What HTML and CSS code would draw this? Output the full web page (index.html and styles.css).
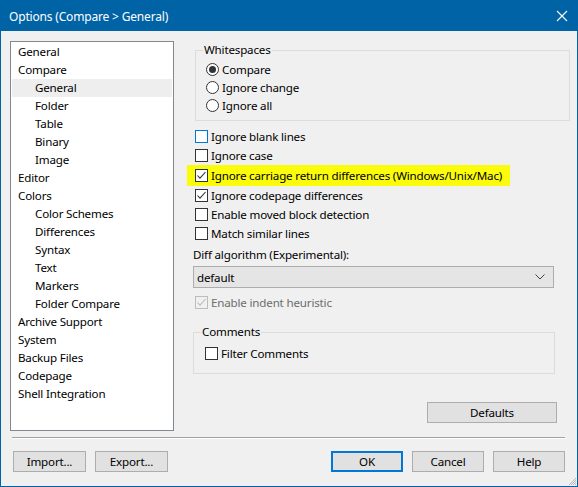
FILE: index.html
```html
<!DOCTYPE html>
<html lang="en">

<head>
  <meta charset="UTF-8">
  <title>Options (Compare &gt; General)</title>
  <link rel="stylesheet" href="styles.css">
</head>

<body>
  <div class="window">
    <div class="titlebar">
      <span class="title">Options (Compare &gt; General)</span>
      <svg class="close" width="12" height="12" viewBox="0 0 12 12">
        <path d="M1 1 L11 11 M11 1 L1 11" stroke="#fff" stroke-width="1.1" fill="none" />
      </svg>
    </div>

    <div class="main">
      <ul class="tree">
        <li>General</li>
        <li>Compare</li>
        <li class="sub selected">General</li>
        <li class="sub">Folder</li>
        <li class="sub">Table</li>
        <li class="sub">Binary</li>
        <li class="sub">Image</li>
        <li>Editor</li>
        <li>Colors</li>
        <li class="sub">Color Schemes</li>
        <li class="sub">Differences</li>
        <li class="sub">Syntax</li>
        <li class="sub">Text</li>
        <li class="sub">Markers</li>
        <li class="sub">Folder Compare</li>
        <li>Archive Support</li>
        <li>System</li>
        <li>Backup Files</li>
        <li>Codepage</li>
        <li>Shell Integration</li>
      </ul>

      <div class="panel">
        <fieldset class="group whitespaces">
          <legend>Whitespaces</legend>
          <div class="option"><span class="radio on"></span>Compare</div>
          <div class="option"><span class="radio"></span>Ignore change</div>
          <div class="option"><span class="radio"></span>Ignore all</div>
        </fieldset>

        <div class="checks">
          <div class="option check-row"><span class="box focus"></span>Ignore blank lines</div>
          <div class="option check-row"><span class="box"></span>Ignore case</div>
          <div class="option check-row highlight">
            <span class="box"><svg width="11" height="11" viewBox="0 0 11 11"><path d="M1.5 5.5 L4 8.2 L9.5 2" stroke="#333" stroke-width="1.1" fill="none" /></svg></span>
            Ignore carriage return differences (Windows/Unix/Mac)
          </div>
          <div class="option check-row">
            <span class="box"><svg width="11" height="11" viewBox="0 0 11 11"><path d="M1.5 5.5 L4 8.2 L9.5 2" stroke="#333" stroke-width="1.1" fill="none" /></svg></span>
            Ignore codepage differences
          </div>
          <div class="option check-row"><span class="box"></span>Enable moved block detection</div>
          <div class="option check-row"><span class="box"></span>Match similar lines</div>
        </div>

        <div class="field-label">Diff algorithm (Experimental):</div>
        <div class="select">
          <span>default</span>
          <svg width="10" height="6" viewBox="0 0 10 6"><path d="M0.5 0.5 L5 5 L9.5 0.5" stroke="#444" stroke-width="1" fill="none" /></svg>
        </div>

        <div class="option disabled">
          <span class="box"><svg width="11" height="11" viewBox="0 0 11 11"><path d="M1.5 5.5 L4 8.2 L9.5 2" stroke="#bcbcbc" stroke-width="1.1" fill="none" /></svg></span>
          Enable indent heuristic
        </div>

        <fieldset class="group comments">
          <legend>Comments</legend>
          <div class="option"><span class="box"></span>Filter Comments</div>
        </fieldset>

        <div class="defaults-row">
          <button class="btn defaults">Defaults</button>
        </div>
      </div>
    </div>

    <div class="separator"></div>

    <div class="footer">
      <button class="btn">Import...</button>
      <button class="btn">Export...</button>
      <span class="spacer"></span>
      <button class="btn primary">OK</button>
      <button class="btn">Cancel</button>
      <button class="btn">Help</button>
    </div>

    <svg class="grip" width="9" height="9" viewBox="0 0 9 9">
      <path d="M8 1 L1 8 M8 3 L3 8 M8 5 L5 8 M8 7 L7 8" stroke="#b8b8b8" stroke-width="1" fill="none" />
    </svg>
  </div>
</body>

</html>
```

FILE: styles.css
```css
body {
  margin: 0;
  font-family: "Segoe UI", "Noto Sans", sans-serif;
  font-size: 11.6px;
  letter-spacing: -0.18px;
  color: #000;
  background: #f0f0f0;
}

.window {
  position: relative;
  width: 578px;
  height: 487px;
  box-sizing: border-box;
  border: 1px solid #0063a5;
  background-color: #f0f0f0;
}

.titlebar {
  display: flex;
  align-items: center;
  justify-content: space-between;
  height: 30px;
  margin-top: -1px;
  padding: 1px 9px 0 8px;
  background-color: #0063a5;
  color: #fff;
}

.title {
  font-size: 12px;
}

.main {
  display: flex;
  padding: 10px 0 0 9px;
}

.tree {
  list-style: none;
  margin: 0;
  padding: 1px 1px 0 1px;
  width: 164px;
  height: 390px;
  box-sizing: border-box;
  border: 1px solid #828790;
  background-color: #fff;
}

.tree li {
  height: 18px;
  line-height: 18px;
  padding-left: 6px;
  white-space: nowrap;
}

.tree li.sub {
  padding-left: 23px;
}

.tree li.selected {
  background-color: #eeeeee;
}

.panel {
  margin-left: 19px;
  padding-top: 1px;
  width: 377px;
}

.group {
  margin: 0;
  border: 1px solid #dcdcdc;
}

.group legend {
  padding: 0 1px;
  line-height: 16px;
}

.whitespaces {
  margin-left: 2px;
  padding: 2px 10px 6px 10px;
}

.whitespaces legend {
  margin-left: -3px;
}

.option {
  display: flex;
  align-items: center;
  height: 18px;
  white-space: nowrap;
}

.radio {
  position: relative;
  width: 13px;
  height: 13px;
  box-sizing: border-box;
  margin-right: 3px;
  border: 1px solid #333;
  border-radius: 50%;
  background-color: #fff;
}

.radio.on:after {
  content: "";
  position: absolute;
  left: 2px;
  top: 2px;
  width: 7px;
  height: 7px;
  border-radius: 50%;
  background-color: #333;
}

.checks {
  margin-top: 6px;
  margin-left: 2px;
}

.check-row {
  height: 19px;
}

.box {
  display: flex;
  align-items: center;
  justify-content: center;
  width: 13px;
  height: 13px;
  box-sizing: border-box;
  margin-right: 3px;
  border: 1px solid #333;
  background-color: #fff;
}

.box.focus {
  border-color: #0078d7;
}

.highlight {
  width: fit-content;
  margin: 0 0 0 -8px;
  padding: 1px 8px;
  height: 19px;
  background-color: #fbfb0c;
  position: relative;
}

.field-label {
  height: 18px;
  line-height: 18px;
  margin-top: 3px;
}

.select {
  display: flex;
  align-items: center;
  justify-content: space-between;
  width: 361px;
  height: 22px;
  box-sizing: border-box;
  margin-top: 2px;
  padding: 0 8px 0 3px;
  border: 1px solid #adadad;
  background-color: #e5e5e5;
}

.disabled {
  margin-top: 5px;
  margin-left: 2px;
  color: #6d6d6d;
}

.disabled .box {
  border-color: #bcbcbc;
  background-color: #f0f0f0;
}

.comments {
  width: 362px;
  box-sizing: border-box;
  margin-top: 13px;
  padding: 4px 11px 11px 11px;
}

.comments legend {
  margin-left: -4px;
}

.defaults-row {
  margin-top: 28px;
  padding-left: 234px;
}

.btn {
  height: 21px;
  box-sizing: border-box;
  padding: 0;
  border: 1px solid #adadad;
  background-color: #e1e1e1;
  font-family: inherit;
  font-size: 11.6px;
  letter-spacing: -0.18px;
  color: #000;
}

.defaults {
  width: 130px;
}

.separator {
  margin: 6px 0 0 11px;
  width: 553px;
  height: 1px;
  background-color: #a0a0a0;
  border-bottom: 1px solid #fff;
}

.footer {
  display: flex;
  gap: 9px;
  margin-top: 12px;
  padding: 0 12px 0 12px;
}

.footer .btn {
  width: 73px;
}

.footer .btn.primary,
.footer .btn.primary ~ .btn {
  width: 72px;
}

.footer .btn.primary {
  border: 2px solid #0078d7;
}

.spacer {
  flex: 1;
}

.grip {
  position: absolute;
  right: 0;
  bottom: 0;
}
```
